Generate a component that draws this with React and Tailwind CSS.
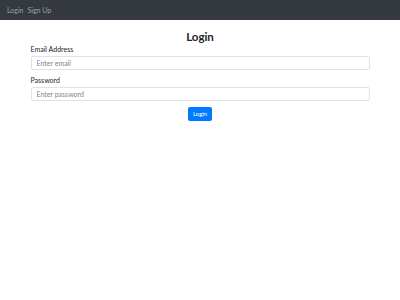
import React, { useState } from 'react';

const App = () => {
  const [email, setEmail] = useState('');
  const [password, setPassword] = useState('');

  return (
    <div className="min-h-[300px] w-[400px] bg-white" style={{ fontFamily: 'Lato, "Open Sans", sans-serif' }}>
      <nav className="flex h-[20px] items-center gap-[4px] bg-[#343a40] px-[7px] text-[7px] text-white/50">
        <a href="#" className="leading-none">Login</a>
        <a href="#" className="leading-none">Sign Up</a>
      </nav>

      <div className="mx-auto w-[339px] pt-[9px]">
        <h2 className="text-center text-[11.5px] font-bold leading-[15px] text-[#212529]">Login</h2>

        <form onSubmit={(e) => e.preventDefault()}>
          <div className="mb-[5px]">
            <label className="mb-[2px] block text-[7px] leading-[10px] text-[#212529]">Email Address</label>
            <input
              type="email"
              value={email}
              onChange={(e) => setEmail(e.target.value)}
              placeholder="Enter email"
              className="block h-[14px] w-full rounded-[2px] border border-[#dfe3e7] px-[5px] text-[7px] text-[#495057] placeholder:text-[#7d858c] outline-none"
            />
          </div>
          <div className="mb-[6px]">
            <label className="mb-[2px] block text-[7px] leading-[10px] text-[#212529]">Password</label>
            <input
              type="password"
              value={password}
              onChange={(e) => setPassword(e.target.value)}
              placeholder="Enter password"
              className="block h-[14px] w-full rounded-[2px] border border-[#dfe3e7] px-[5px] text-[7px] text-[#495057] placeholder:text-[#7d858c] outline-none"
            />
          </div>
          <div className="flex justify-center">
            <button type="submit" className="h-[14px] w-[24px] rounded-[2px] bg-[#007bff] text-[6px] leading-none text-white">
              Login
            </button>
          </div>
        </form>
      </div>
    </div>
  );
};

export default App;
